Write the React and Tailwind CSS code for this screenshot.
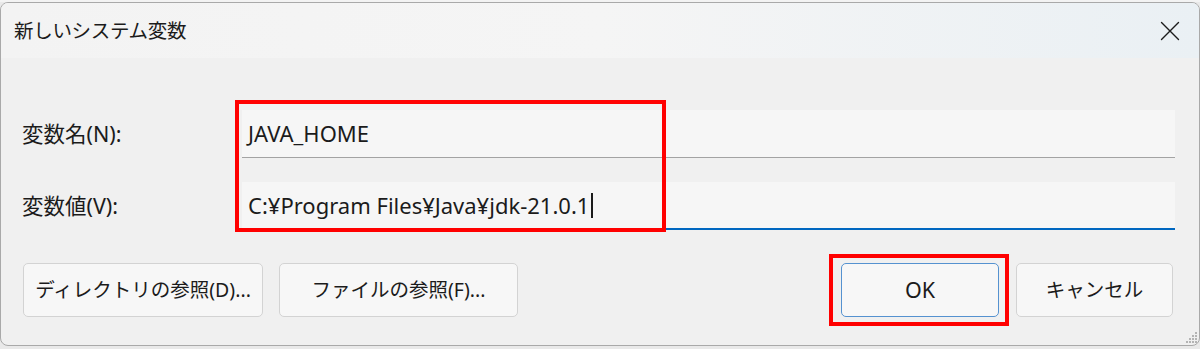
import React from "react";

const F = "font-['Noto_Sans','Noto_Sans_CJK_JP',sans-serif]";

function CloseIcon() {
  return (
    <svg width="20" height="20" viewBox="0 0 20 20" className="block">
      <path d="M1.5 1.5 L18.5 18.5 M18.5 1.5 L1.5 18.5" stroke="#1c1c1c" strokeWidth="1.4" strokeLinecap="round" fill="none" />
    </svg>
  );
}

function Grip() {
  const dots = [
    [10, 0],
    [7, 3], [10, 3],
    [4, 6], [7, 6], [10, 6],
    [1, 9], [4, 9], [7, 9], [10, 9],
  ];
  return (
    <svg width="13" height="12" viewBox="0 0 13 12" className="block">
      {dots.map(([x, y], i) => (
        <rect key={i} x={x} y={y} width="2" height="2" fill="#b4b4b4" />
      ))}
    </svg>
  );
}

function Button({ children, w, primary }) {
  return (
    <div
      className={
        "h-[54px] flex items-center justify-center rounded-[5px] bg-[#f7f7f7] text-[#1b1b1b] " +
        (primary ? "border-[1.5px] border-[#5592d0] text-[21.5px]" : "border border-[#d3d3d3] text-[19.5px]")
      }
      style={{ width: w }}
    >
      {children}
    </div>
  );
}

export default function App() {
  return (
    <div className={"relative w-[1200px] h-[349px] overflow-hidden bg-[#e9e9e9] " + F}>
      <div className="h-[2px] bg-[#f3f3f3]" />
      <div className="relative h-[344px] rounded-[8px] border border-[#a9a9a9] bg-[#f0f0f0] overflow-hidden flex flex-col">
        {/* title bar */}
        <div className="h-[55px] shrink-0 flex items-center justify-between pl-[13px] pr-[19px] bg-gradient-to-r from-[#f3f3f3] via-[#f5f5f5] to-[#eaf0f4]">
          <span className="text-[19.5px] text-[#1b1b1b] leading-none tracking-[-0.3px] mt-[1px]">新しいシステム変数</span>
          <div className="mt-[1px]">
            <CloseIcon />
          </div>
        </div>
        {/* body */}
        <div className="flex-1 flex flex-col pl-[21px] pt-[52px]">
          <div className="flex items-center">
            <div className="w-[220px] text-[21.5px] text-[#1b1b1b]">変数名(N):</div>
            <div className="w-[933px] h-[48px] bg-[#f6f6f6] border-b border-b-[#a3a3a3] flex items-center pl-[6px] text-[22px] text-[#1b1b1b]">
              JAVA_HOME
            </div>
          </div>
          <div className="flex items-center mt-[24px]">
            <div className="w-[220px] text-[21.5px] text-[#1b1b1b]">変数値(V):</div>
            <div className="w-[933px] h-[48px] bg-[#f6f6f6] border-b-2 border-b-[#0067c0] flex items-center pl-[6px] text-[22px] text-[#1b1b1b]">
              <span>C:¥Program Files¥Java¥jdk-21.0.1</span>
              <span className="inline-block w-[1.5px] h-[25px] bg-[#1b1b1b] ml-[2px]" />
            </div>
          </div>
          <div className="flex items-center mt-[33px] pl-[1px]">
            <Button w={240}>ディレクトリの参照(D)...</Button>
            <div className="w-[16px]" />
            <Button w={239}>ファイルの参照(F)...</Button>
            <div className="w-[323px]" />
            <Button w={158} primary>OK</Button>
            <div className="w-[17px]" />
            <Button w={157}>キャンセル</Button>
          </div>
        </div>
        <div className="absolute right-[1px] bottom-[1px]">
          <Grip />
        </div>
      </div>

      {/* annotation overlays */}
      <div className="absolute left-[235px] top-[100px] w-[431px] h-[132px] border-[4px] border-[#ff0000] pointer-events-none" />
      <div className="absolute left-[829px] top-[254px] w-[180px] h-[72px] border-[4px] border-[#ff0000] pointer-events-none" />
    </div>
  );
}
